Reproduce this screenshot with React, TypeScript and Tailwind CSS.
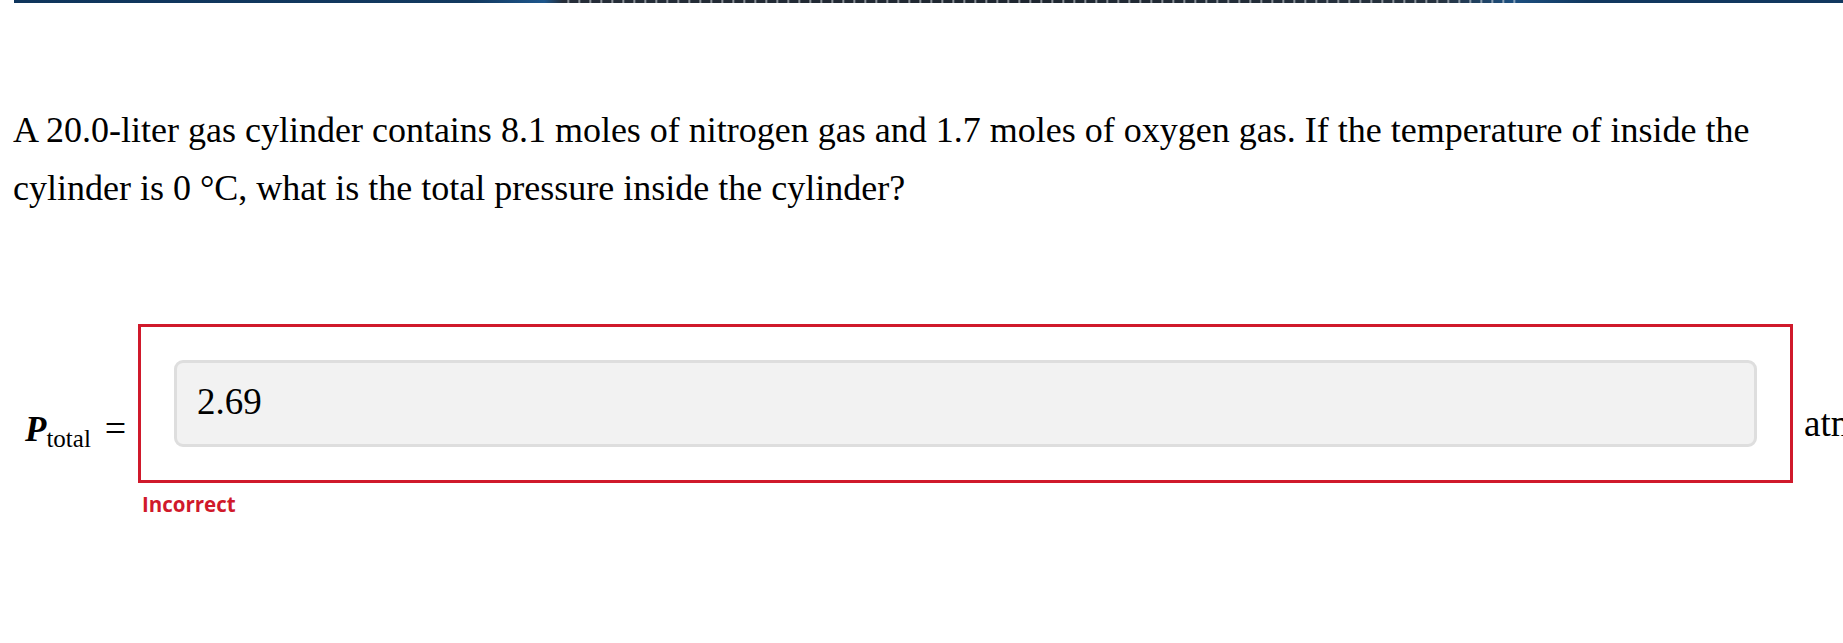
import React from "react";

export default function App() {
  return (
    <div className="w-[1843px] h-[643px] overflow-hidden bg-white relative">
      {/* top banner strip */}
      <div className="ml-[14px] h-[3px] bg-[linear-gradient(to_right,#0f355c_0%,#12395f_25%,#1d568c_29%,#252d38_30%,#1e2630_55%,#26323f_78%,#1c4f80_82%,#11385f_86%,#11385f_100%)] relative">
        <div className="absolute left-[545px] w-[965px] top-0 h-[3px] bg-[repeating-linear-gradient(to_right,transparent_0px,transparent_8px,rgba(230,235,240,0.7)_9px,transparent_11px)]" />
      </div>

      <div className="pl-[13px]" style={{ fontFamily: '"Liberation Serif", "Times New Roman", serif' }}>
        <p className="mt-[98px] w-[1790px] text-[36px] leading-[58px] text-black">
          A 20.0-liter gas cylinder contains 8.1 moles of nitrogen gas and 1.7 moles of oxygen gas. If the temperature of inside the cylinder is 0 °C, what is the total pressure inside the cylinder?
        </p>

        <div className="mt-[107px] flex items-start">
          <div className="w-[125px] shrink-0 pt-[85px] pl-[12px] flex items-baseline text-black">
            <span className="text-[35px] leading-none font-bold italic">P</span>
            <span className="text-[25px] leading-none relative top-[6px]">total</span>
            <span className="text-[38px] leading-none ml-[14px]">=</span>
          </div>

          <div className="flex flex-col shrink-0">
            <div className="w-[1655px] h-[159px] border-[3px] border-[#d0192b] p-[33px]">
              <div className="w-full h-full rounded-[9px] border-[3px] border-[#dedede] bg-[#f2f2f2] flex items-center pl-[20px]">
                <span className="text-[37px] leading-none text-black -mt-[5px]">2.69</span>
              </div>
            </div>
            <div
              className="mt-[6px] pl-[4px] text-[20.5px] font-bold text-[#d0192b] leading-[30px]"
              style={{ fontFamily: '"Open Sans", "Noto Sans", sans-serif' }}
            >
              Incorrect
            </div>
          </div>

          <div className="shrink-0 pl-[11px] pt-[81px] text-[37px] leading-none text-black whitespace-nowrap">
            atm
          </div>
        </div>
      </div>
    </div>
  );
}
